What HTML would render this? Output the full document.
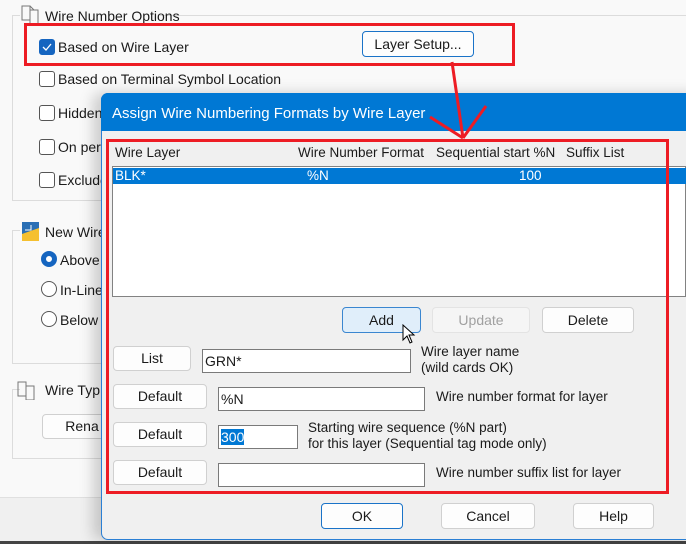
<!DOCTYPE html>
<html><head><style>
*{box-sizing:border-box;margin:0;padding:0}
body{width:686px;height:544px;position:relative;overflow:hidden;background:#f9f9f9;font-family:"Liberation Sans",sans-serif;font-size:13.5px;color:#1a1a1a}
.a{position:absolute;white-space:nowrap}
.gb{position:absolute;border:1px solid #dcdcdc}
.cb{position:absolute;width:16px;height:16px;border:1px solid #555;border-radius:3px;background:#fff}
.rd{position:absolute;width:16px;height:16px;border:1px solid #555;border-radius:50%;background:#fff}
.btn{position:absolute;background:#fdfdfd;border:1px solid #d0d0d0;border-radius:4px;text-align:center;font-size:14px;color:#1a1a1a}
.tb{position:absolute;background:#fff;border:1px solid #7a7a7a;font-size:14px;padding-left:2px}
.red{position:absolute;border:3px solid #ed1c24}
</style></head><body>
<div class="gb" style="left:12px;top:15px;width:700px;height:186px"></div>
<div class="a" style="left:20px;top:5px;width:140px;height:20px;background:#f9f9f9"></div>
<svg class="a" style="left:21px;top:4px" width="20" height="20"><path d="M1 2h8v14H1z M9 6h8v14H9z M9 2l4 4" fill="none" stroke="#777"/></svg>
<div class="a" style="left:45px;top:8px;font-size:14px">Wire Number Options</div>
<div class="cb" style="left:39px;top:39px;background:#1565c0;border-color:#1565c0"></div>
<svg class="a" style="left:39px;top:39px" width="16" height="16"><path d="M4 8l3 3 5-6" fill="none" stroke="#fff" stroke-width="1.3"/></svg>
<div class="a" style="left:58px;top:39px;font-size:14px">Based on Wire Layer</div>
<div class="btn" style="left:362px;top:31px;width:112px;height:26px;border-color:#1a73c8;line-height:24px">Layer Setup...</div>
<div class="cb" style="left:39px;top:71px"></div><div class="a" style="left:58px;top:71px;font-size:14px">Based on Terminal Symbol Location</div>
<div class="cb" style="left:39px;top:105px"></div><div class="a" style="left:58px;top:105px;font-size:14px">Hidden</div>
<div class="cb" style="left:39px;top:139px"></div><div class="a" style="left:58px;top:139px;font-size:14px">On per</div>
<div class="cb" style="left:39px;top:172px"></div><div class="a" style="left:58px;top:172px;font-size:14px">Exclude</div>
<div class="gb" style="left:12px;top:230px;width:700px;height:134px"></div>
<div class="a" style="left:20px;top:220px;width:90px;height:20px;background:#f9f9f9"></div>
<svg class="a" style="left:22px;top:222px" width="17" height="19"><rect width="17" height="19" fill="#2a6fb5"/><path d="M0 12L17 6V19H0z" fill="#f5c030"/><path d="M3 8h6v-5" stroke="#fff" fill="none"/></svg>
<div class="a" style="left:45px;top:224px;font-size:14px">New Wire</div>
<div class="rd" style="left:41px;top:251px;border:5px solid #1565c0"></div><div class="a" style="left:60px;top:252px;font-size:14px">Above</div>
<div class="rd" style="left:41px;top:281px"></div><div class="a" style="left:60px;top:282px;font-size:14px">In-Line</div>
<div class="rd" style="left:41px;top:311px"></div><div class="a" style="left:60px;top:312px;font-size:14px">Below</div>
<div class="gb" style="left:12px;top:389px;width:700px;height:70px"></div>
<div class="a" style="left:20px;top:378px;width:90px;height:20px;background:#f9f9f9"></div>
<svg class="a" style="left:17px;top:380px" width="20" height="20"><path d="M1 2h8v14H1z M9 6h8v14H9z" fill="none" stroke="#777"/></svg>
<div class="a" style="left:45px;top:382px;font-size:14px">Wire Typ</div>
<div class="btn" style="left:42px;top:414px;width:80px;height:25px;line-height:23px">Rena</div>
<div class="a" style="left:0;top:497px;width:686px;height:47px;background:#f0f0f0;border-top:1px solid #e0e0e0"></div>
<div class="a" style="left:0;top:541px;width:686px;height:3px;background:#444"></div>
<div class="a" style="left:101px;top:93px;width:600px;height:447px;background:#f0f0f0;border:1px solid #2a7fd4;border-radius:7px 0 0 7px;box-shadow:-8px 0 14px rgba(0,0,0,0.18)"></div>
<div class="a" style="left:101px;top:93px;width:600px;height:38px;background:#0078d4;border-radius:7px 0 0 0"></div>
<div class="a" style="left:112px;top:105px;font-size:15px;color:#fff">Assign Wire Numbering Formats by Wire Layer</div>
<div class="a" style="left:115px;top:145px">Wire Layer</div>
<div class="a" style="left:298px;top:145px">Wire Number Format</div>
<div class="a" style="left:436px;top:145px">Sequential start %N</div>
<div class="a" style="left:566px;top:145px">Suffix List</div>
<div class="a" style="left:112px;top:166px;width:574px;height:131px;background:#fff;border:1px solid #828282"></div>
<div class="a" style="left:113px;top:168px;width:573px;height:16px;background:#0078d4"></div>
<div class="a" style="left:115px;top:168px;color:#fff">BLK*</div>
<div class="a" style="left:307px;top:168px;color:#fff">%N</div>
<div class="a" style="left:519px;top:168px;color:#fff">100</div>
<div class="btn" style="left:342px;top:307px;width:79px;height:26px;line-height:24px;background:#e0eefa;border-color:#3a86d0">Add</div>
<div class="btn" style="left:432px;top:307px;width:98px;height:26px;line-height:24px;background:#f5f5f5;border-color:#e3e3e3;color:#a0a0a0">Update</div>
<div class="btn" style="left:542px;top:307px;width:92px;height:26px;line-height:24px">Delete</div>
<svg class="a" style="left:402px;top:324px" width="14" height="22"><path d="M1 1v15l4-4 3 7 2-1-3-7h5z" fill="#fff" stroke="#000"/></svg>
<div class="btn" style="left:113px;top:346px;width:78px;height:25px;line-height:23px">List</div>
<div class="tb" style="left:202px;top:349px;width:209px;height:24px;line-height:22px">GRN*</div>
<div class="a" style="left:421px;top:344px;line-height:16px">Wire layer name<br>(wild cards OK)</div>
<div class="btn" style="left:113px;top:384px;width:94px;height:25px;line-height:23px">Default</div>
<div class="tb" style="left:218px;top:387px;width:207px;height:24px;line-height:22px">%N</div>
<div class="a" style="left:436px;top:389px">Wire number format for layer</div>
<div class="btn" style="left:113px;top:422px;width:94px;height:25px;line-height:23px">Default</div>
<div class="tb" style="left:218px;top:425px;width:80px;height:24px;line-height:22px"><span style="background:#0078d4;color:#fff">300</span></div>
<div class="a" style="left:308px;top:420px;line-height:16px">Starting wire sequence (%N part)<br>for this layer (Sequential tag mode only)</div>
<div class="btn" style="left:113px;top:460px;width:94px;height:25px;line-height:23px">Default</div>
<div class="tb" style="left:218px;top:463px;width:207px;height:24px"></div>
<div class="a" style="left:436px;top:465px">Wire number suffix list for layer</div>
<div class="btn" style="left:321px;top:503px;width:82px;height:26px;line-height:24px;border-color:#1a73c8">OK</div>
<div class="btn" style="left:441px;top:503px;width:94px;height:26px;line-height:24px">Cancel</div>
<div class="btn" style="left:573px;top:503px;width:81px;height:26px;line-height:24px">Help</div>
<div class="red" style="left:24px;top:23px;width:491px;height:43px"></div>
<div class="red" style="left:106px;top:139px;width:563px;height:355px"></div>
<svg class="a" style="left:0;top:0" width="686" height="544"><path d="M452 62L463 138M430 117L463 138M486 106L463 138" stroke="#ed1c24" stroke-width="3" fill="none"/></svg>
</body></html>
